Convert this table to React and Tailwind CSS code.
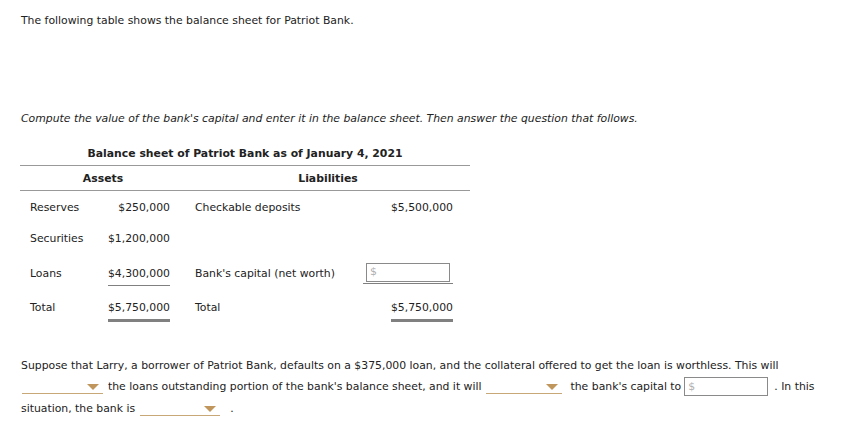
import React from 'react';

const font = { fontFamily: '"DejaVu Sans", Verdana, sans-serif' };

const Dropdown = ({ className = '' }) => (
  <span className={`flex items-start justify-end h-[14px] border-b border-[#c9a878] pr-[4px] pt-[4px] shrink-0 ${className}`}>
    <span className="w-0 h-0 border-l-[6px] border-r-[6px] border-t-[6px] border-l-transparent border-r-transparent border-t-[#c1965c]" />
  </span>
);

const DollarInput = ({ className = '' }) => (
  <span className={`flex items-center w-[84px] h-[19px] border border-[#8a8a8a] bg-white pl-[3px] text-[#b0b0b0] shrink-0 ${className}`}>
    $
  </span>
);

export default function App() {
  return (
    <div className="w-[842px] h-[422px] bg-white text-[#222] text-[10.85px] px-[21px] pt-[14px]" style={font}>
      <p className="leading-[14px]">The following table shows the balance sheet for Patriot Bank.</p>

      <p className="leading-[14px] italic mt-[84px]">
        Compute the value of the bank's capital and enter it in the balance sheet. Then answer the question that follows.
      </p>

      <table className="mt-[14px] w-[450px] border-collapse -ml-px" style={{ tableLayout: 'fixed' }}>
        <colgroup>
          <col className="w-[80px]" />
          <col className="w-[86px]" />
          <col className="w-[170px]" />
          <col className="w-[114px]" />
        </colgroup>
        <thead>
          <tr>
            <th colSpan={4} className="h-[25px] pt-[4px] font-bold text-center border-b border-[#999]">
              Balance sheet of Patriot Bank as of January 4, 2021
            </th>
          </tr>
          <tr>
            <th colSpan={2} className="h-[25px] pt-[3px] font-bold text-center border-b border-[#999]">Assets</th>
            <th colSpan={2} className="h-[25px] pt-[3px] font-bold text-center border-b border-[#999]">Liabilities</th>
          </tr>
        </thead>
        <tbody>
          <tr className="h-[35px]">
            <td className="pl-[10px] pt-[1px]">Reserves</td>
            <td className="text-right pr-[16px] pt-[1px]">$250,000</td>
            <td className="pl-[9px] pt-[1px]">Checkable deposits</td>
            <td className="text-right pr-[17px] pt-[1px]">$5,500,000</td>
          </tr>
          <tr className="h-[28px]">
            <td className="pl-[10px]">Securities</td>
            <td className="text-right pr-[16px]">$1,200,000</td>
            <td />
            <td />
          </tr>
          <tr className="h-[39px]">
            <td className="pl-[10px] align-top pt-[13px]">Loans</td>
            <td className="text-right pr-[16px] align-top pt-[13px]">
              <span className="inline-block border-b border-[#808080] pb-[3px]">$4,300,000</span>
            </td>
            <td className="pl-[9px] align-top pt-[13px]">Bank's capital (net worth)</td>
            <td className="text-right pr-[17px] align-top pt-[10px]">
              <span className="inline-block border-b border-[#808080] px-[3px] pb-[1px]">
                <DollarInput />
              </span>
            </td>
          </tr>
          <tr className="h-[30px]">
            <td className="pl-[10px] align-top pt-[8px]">Total</td>
            <td className="text-right pr-[16px] align-top pt-[8px]">
              <span className="inline-block border-b-[3px] border-[#808080] pb-[3px]">$5,750,000</span>
            </td>
            <td className="pl-[9px] align-top pt-[8px]">Total</td>
            <td className="text-right pr-[17px] align-top pt-[8px]">
              <span className="inline-block border-b-[3px] border-[#808080] pb-[3px]">$5,750,000</span>
            </td>
          </tr>
        </tbody>
      </table>

      <div className="mt-[33px]">
        <div className="flex items-center h-[21px] whitespace-nowrap">
          Suppose that Larry, a borrower of Patriot Bank, defaults on a $375,000 loan, and the collateral offered to get the loan is worthless. This will
        </div>
        <div className="flex items-center h-[21px] whitespace-nowrap">
          <Dropdown className="ml-px w-[81px]" />
          <span className="ml-[5px]">the loans outstanding portion of the bank's balance sheet, and it will</span>
          <Dropdown className="ml-[4px] w-[76px]" />
          <span className="ml-[9px]">the bank's capital to</span>
          <DollarInput className="ml-[3px] h-[18px]" />
          <span className="ml-[6px]">. In this</span>
        </div>
        <div className="flex items-center h-[23px] pt-[1px] whitespace-nowrap">
          <span>situation, the bank is</span>
          <Dropdown className="ml-[5px] w-[80px]" />
          <span className="ml-[10px]">.</span>
        </div>
      </div>
    </div>
  );
}
